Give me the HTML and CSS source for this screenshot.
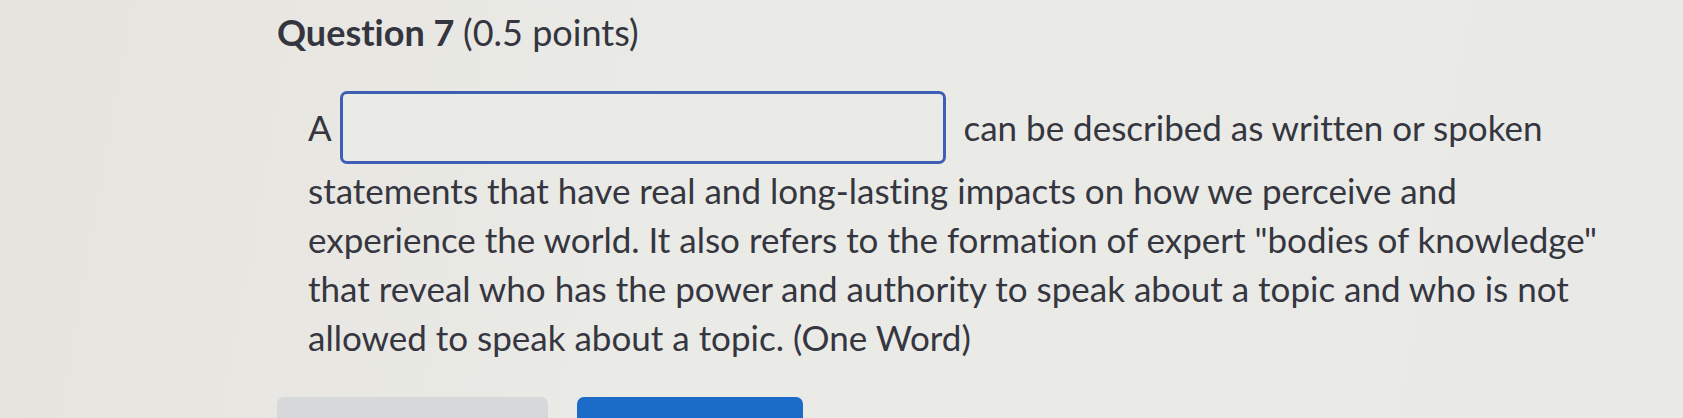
FILE: index.html
```html
<!DOCTYPE html>
<html lang="en">
<head>
    <meta charset="UTF-8">
    <title>Question 7</title>
    <link rel="stylesheet" href="styles.css">
</head>
<body>
    <div class="quiz">
        <h2 class="question-title">Question 7 <span class="points">(0.5 points)</span></h2>

        <div class="question-body">
            A <input type="text" class="blank" aria-label="Blank 1"> can be described as written or spoken
            statements that have real and long-lasting impacts on how we perceive and
            experience the world. It also refers to the formation of expert "bodies of knowledge"
            that reveal who has the power and authority to speak about a topic and who is not
            allowed to speak about a topic. (One Word)
        </div>

        <div class="actions">
            <button class="btn btn-secondary"></button>
            <button class="btn btn-primary"></button>
        </div>
    </div>
</body>
</html>
```

FILE: styles.css
```css
* {
    margin: 0;
    padding: 0;
    box-sizing: border-box;
}

body {
    font-family: Lato, "Open Sans", sans-serif;
    font-variant-ligatures: none;
    background: linear-gradient(100deg, #e6e4df 0%, #eaeae6 40%, #e9eae7 100%);
    color: #35363f;
    height: 418px;
    overflow: hidden;
}

.quiz {
    padding: 9px 0 0 277px;
}

.question-title {
    font-size: 36px;
    font-weight: 700;
    line-height: 46px;
    color: #34353e;
}

.question-title .points {
    font-weight: 400;
}

.question-body {
    margin: 36px 0 0 31px;
    width: 1300px;
    font-size: 35px;
    line-height: 49px;
}

/* fill-in-the-blank field sits on the text baseline */
.blank {
    display: inline-block;
    vertical-align: baseline;
    width: 606px;
    height: 73px;
    margin: 0 8px 2px 1px;
    padding: 0 12px 2px;
    font: inherit;
    color: inherit;
    border: 3px solid #3f5eb6;
    border-radius: 7px;
    background: #eaeae7;
    outline: none;
}

.actions {
    display: flex;
    gap: 29px;
    margin-top: 35px;
}

.btn {
    height: 40px;
    border: none;
    border-radius: 7px;
}

.btn-secondary {
    width: 271px;
    background: #d6d8d9;
}

.btn-primary {
    width: 226px;
    background: #1b6bc9;
}
```
